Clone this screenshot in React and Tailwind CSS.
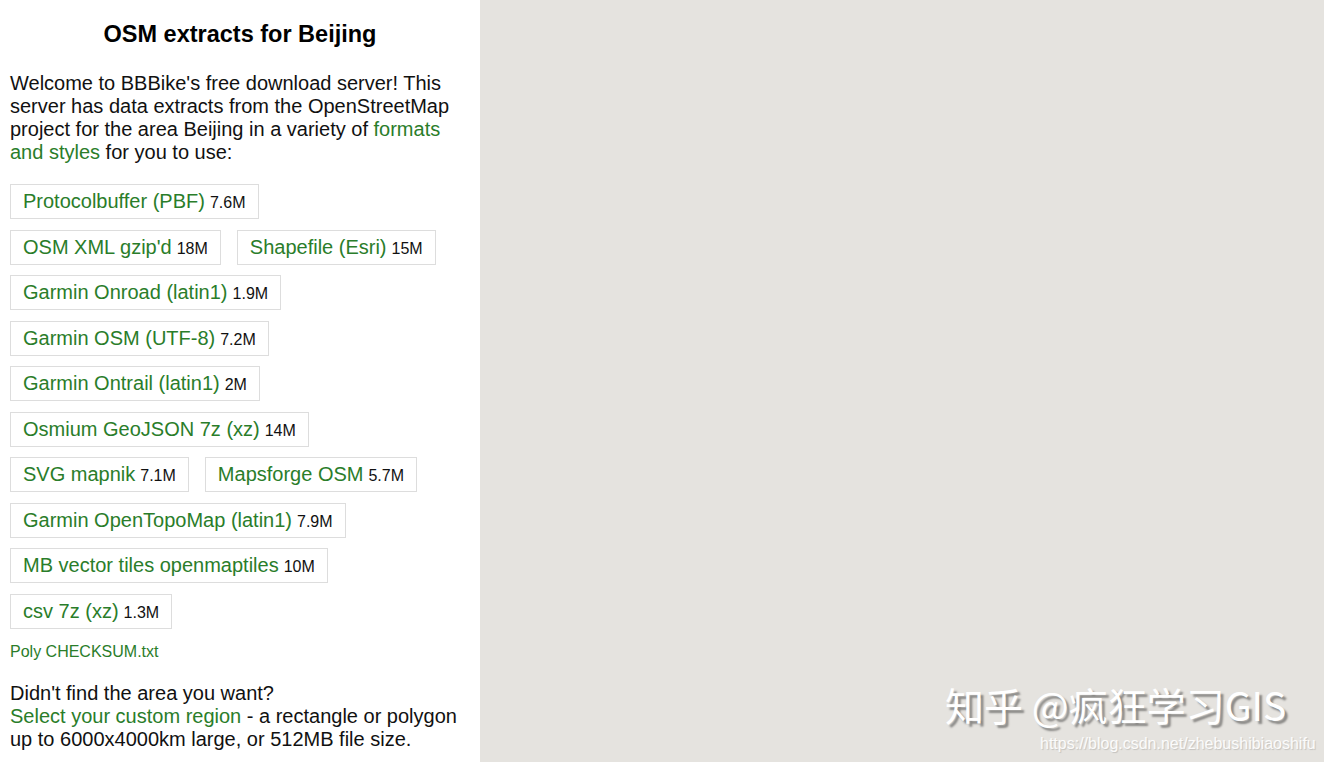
const ROWS = [
  [['Protocolbuffer (PBF)', '7.6M']],
  [['OSM XML gzip\'d', '18M'], ['Shapefile (Esri)', '15M']],
  [['Garmin Onroad (latin1)', '1.9M']],
  [['Garmin OSM (UTF-8)', '7.2M']],
  [['Garmin Ontrail (latin1)', '2M']],
  [['Osmium GeoJSON 7z (xz)', '14M']],
  [['SVG mapnik', '7.1M'], ['Mapsforge OSM', '5.7M']],
  [['Garmin OpenTopoMap (latin1)', '7.9M']],
  [['MB vector tiles openmaptiles', '10M']],
  [['csv 7z (xz)', '1.3M']],
];

function Extract({ name, size }) {
  return (
    <div className="flex h-[35px] items-baseline border border-[#dddddd] px-[12px] pt-[5px] leading-[23px] whitespace-nowrap">
      <a className="text-[20px] text-[#2a7d2a]">{name}</a>
      <span className="ml-[5px] text-[16px] text-[#111]">{size}</span>
    </div>
  );
}

export default function App() {
  return (
    <div className="flex h-[762px] w-[1324px] overflow-hidden font-['Liberation_Sans',Arial,sans-serif]">
      {/* sidebar */}
      <div className="w-[480px] shrink-0 bg-white px-[10px] text-[#111]">
        <h1 className="mt-[20px] text-center text-[23.5px] font-bold leading-[28px] text-black">
          OSM extracts for Beijing
        </h1>
        <p className="mt-[24px] text-[20px] leading-[23px]">
          Welcome to BBBike's free download server! This server has data extracts from the
          OpenStreetMap project for the area Beijing in a variety of{' '}
          <a className="text-[#2a7d2a]">formats and styles</a> for you to use:
        </p>

        <div className="mt-[20px] flex flex-col gap-[10.5px]">
          {ROWS.map((row, i) => (
            <div key={i} className="flex gap-[16px]">
              {row.map(([name, size]) => (
                <Extract key={name} name={name} size={size} />
              ))}
            </div>
          ))}
        </div>

        <div className="mt-[14px] text-[16px] leading-[18px] text-[#2a7d2a]">Poly CHECKSUM.txt</div>

        <p className="mt-[21px] text-[20px] leading-[23px]">
          Didn't find the area you want?
          <br />
          <a className="text-[#2a7d2a]">Select your custom region</a> - a rectangle or polygon up
          to 6000x4000km large, or 512MB file size.
        </p>
      </div>

      {/* map */}
      <div className="relative flex-1 bg-[#e5e3df]">
        <div className="absolute left-[465px] top-[681px] whitespace-nowrap font-['Noto_Sans_CJK_SC',sans-serif] text-[39px] font-normal leading-[46px] text-white [text-shadow:3px_3px_2px_rgba(0,0,0,0.4)]">
          知乎 @疯狂学习GIS
        </div>
        <div className="absolute left-[560px] top-[735px] whitespace-nowrap text-[16px] leading-[18px] text-white/90 [text-shadow:1px_1px_1px_rgba(0,0,0,0.15)]">
          https://blog.csdn.net/zhebushibiaoshifu
        </div>
      </div>
    </div>
  );
}
